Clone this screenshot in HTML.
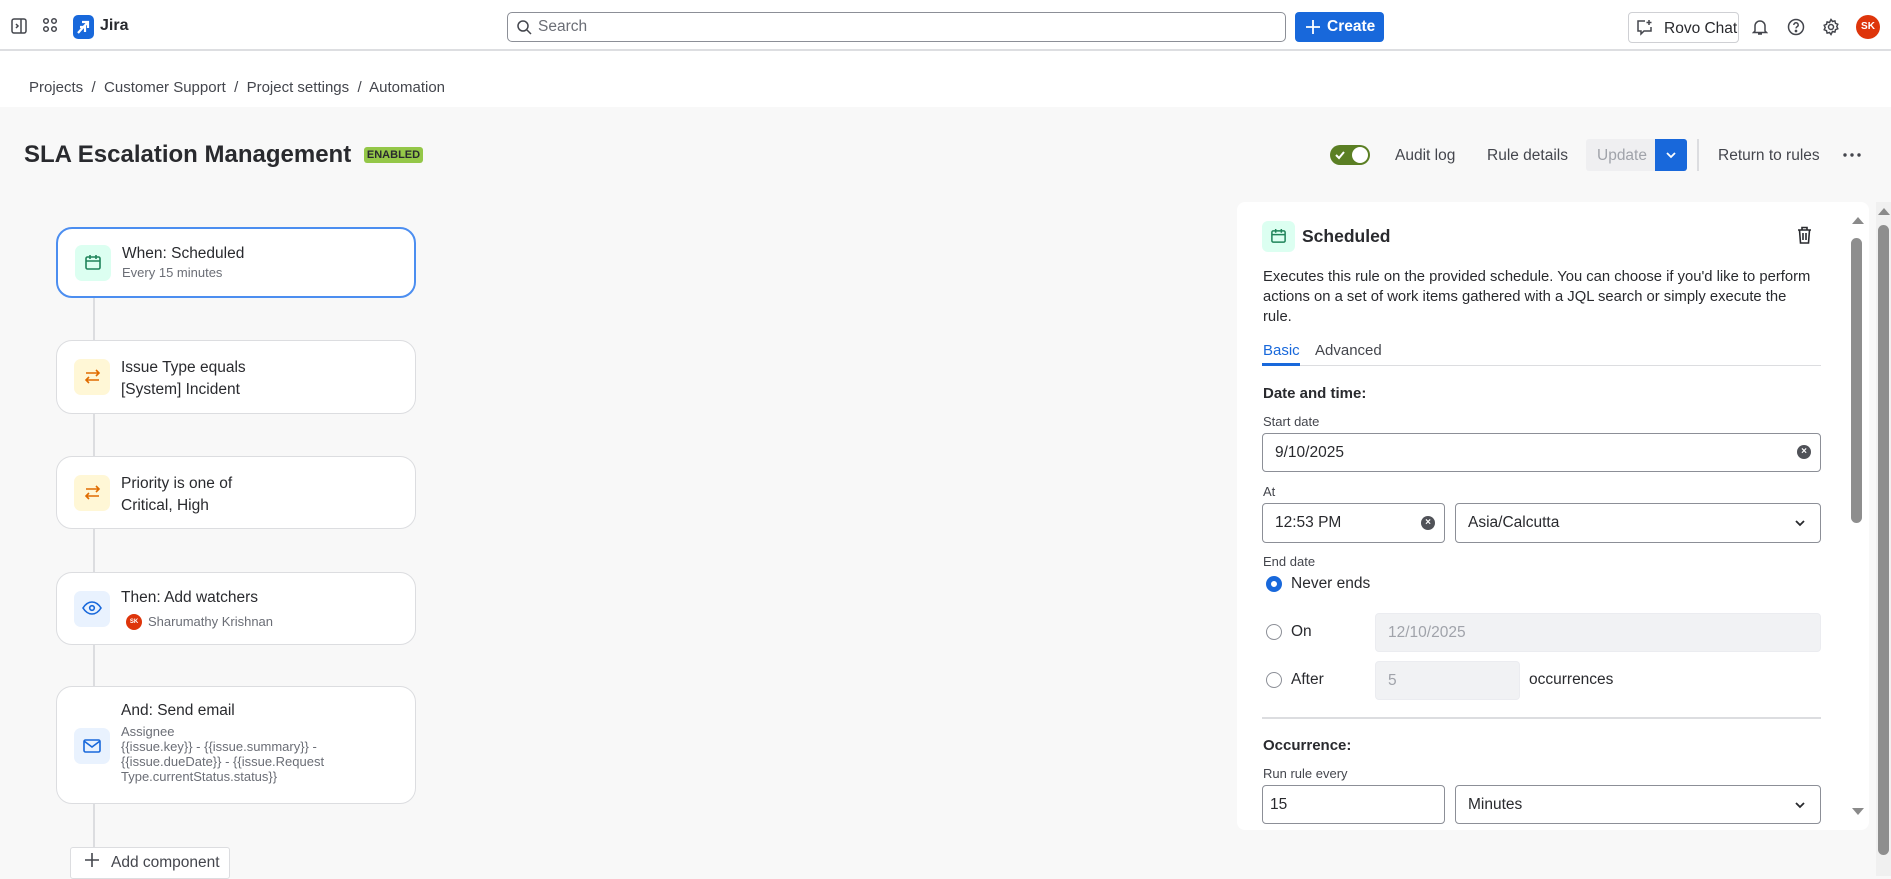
<!DOCTYPE html>
<html><head><meta charset="utf-8"><style>
*{box-sizing:border-box;margin:0;padding:0}
body{width:1891px;height:876px;overflow:hidden;font-family:"Liberation Sans",sans-serif;color:#292a2e;background:#f8f8f8;position:relative}
.a{position:absolute;white-space:nowrap}
.top{left:0;top:0;width:1891px;height:51px;background:#fff;border-bottom:2px solid #dddee1}
.white{left:0;top:51px;width:1891px;height:56px;background:#fff}
.card{position:absolute;left:56px;width:360px;background:#fff;border:1.5px solid #dcdde0;border-radius:16px}
.ib{position:absolute;left:17px;width:36px;height:36px;border-radius:7px}
.ct{position:absolute;left:64px;font-size:15.5px;color:#292a2e;white-space:nowrap}
.cs{font-size:13px;color:#6b6e76}
.inp{position:absolute;border:1.5px solid #8c8f97;border-radius:4px;background:#fff;font-size:15.5px;padding-left:12px;display:flex;align-items:center}
.dis{position:absolute;background:#f1f2f4;border:1px solid #ebecf0;border-radius:4px;font-size:15.5px;color:#a0a3aa;padding-left:12px;display:flex;align-items:center}
.lbl{position:absolute;font-size:13px;color:#44464d}
.radio{position:absolute;width:16px;height:16px;border-radius:50%;border:1.5px solid #8c8f97;background:#fff}
.rt{position:absolute;font-size:15.5px}
.x{position:absolute;width:14px;height:14px;border-radius:50%;background:#505258;color:#fff;font-size:10px;line-height:14px;text-align:center;font-weight:bold}
</style></head><body>
<div class="a top"></div>
<div class="a white"></div>
<svg class="a" style="left:11px;top:18px" width="16" height="16" viewBox="0 0 16 16" fill="none" stroke="#44464d" stroke-width="1.5"><rect x="1" y="1" width="14" height="14" rx="2"/><path d="M10 1v14M5 6l2 2-2 2"/></svg>
<svg class="a" style="left:42px;top:17px" width="16" height="16" viewBox="0 0 16 16" fill="none" stroke="#44464d" stroke-width="1.5"><circle cx="4" cy="4" r="2.3"/><circle cx="12" cy="4" r="2.3"/><circle cx="4" cy="12" r="2.3"/><circle cx="12" cy="12" r="2.3"/></svg>
<div class="a" style="left:73px;top:15px;width:21px;height:24px;background:#1868db;border-radius:5px"></div>
<svg class="a" style="left:76px;top:19px" width="16" height="16" viewBox="0 0 16 16" fill="none" stroke="#fff" stroke-width="2.2"><path d="M6 3h6v6M4 8h5v5M2 14l10-11"/></svg>
<div class="a" style="left:100px;top:17px;font-size:16px;font-weight:bold">Jira</div>
<div class="a" style="left:507px;top:12px;width:779px;height:30px;border:1.5px solid #8c8f97;border-radius:5px;background:#fff"></div>
<svg class="a" style="left:516px;top:19px" width="16" height="16" viewBox="0 0 16 16" fill="none" stroke="#44464d" stroke-width="1.5"><circle cx="7" cy="7" r="5"/><path d="M11 11l4 4"/></svg>
<div class="a" style="left:538px;top:18px;font-size:15.5px;color:#6b6e76">Search</div>
<div class="a" style="left:1295px;top:12px;width:89px;height:30px;background:#1868db;border-radius:4px"></div>
<svg class="a" style="left:1305px;top:19px" width="16" height="16" viewBox="0 0 16 16" stroke="#fff" stroke-width="1.8"><path d="M8 1v14M1 8h14"/></svg>
<div class="a" style="left:1327px;top:18px;font-size:15.5px;font-weight:bold;color:#fff">Create</div>
<div class="a" style="left:1628px;top:12px;width:111px;height:31px;border:1px solid #cfd0d4;border-radius:4px;background:#fff;font-size:15.5px;padding:7px 0 0 35px">Rovo Chat</div>
<svg class="a" style="left:1636px;top:19px" width="18" height="17" viewBox="0 0 18 17" fill="none" stroke="#44464d" stroke-width="1.5"><path d="M9 2H2v10h3v3l3-3h7V8"/><path d="M13 1v5M10.5 3.5h5"/></svg>
<svg class="a" style="left:1752px;top:18px" width="16" height="18" viewBox="0 0 16 18" fill="none" stroke="#44464d" stroke-width="1.5"><path d="M3 13V8a5 5 0 0110 0v5l1.5 1.5h-13zM6 16h4"/></svg>
<svg class="a" style="left:1787px;top:18px" width="18" height="18" viewBox="0 0 18 18" fill="none" stroke="#44464d" stroke-width="1.5"><circle cx="9" cy="9" r="7.5"/><path d="M6.8 7a2.2 2.2 0 114 1.2c-.8.6-1.8 1-1.8 2.2"/><circle cx="9" cy="13" r=".6" fill="#44464d"/></svg>
<svg class="a" style="left:1822px;top:18px" width="18" height="18" viewBox="0 0 18 18" fill="none" stroke="#44464d" stroke-width="1.5"><circle cx="9" cy="9" r="2.5"/><path d="M9 1.5l1.5 2 2.4-.6.6 2.4 2.3 1-1 2.2 1 2.2-2.3 1-.6 2.4-2.4-.6L9 16.5l-1.5-2-2.4.6-.6-2.4-2.3-1 1-2.2-1-2.2 2.3-1 .6-2.4 2.4.6z"/></svg>
<div class="a" style="left:1856px;top:15px;width:24px;height:24px;border-radius:50%;background:#de350b;color:#fff;font-size:10px;font-weight:bold;text-align:center;line-height:24px">SK</div>
<div class="a" style="left:29px;top:79px;font-size:15px;color:#44464d">Projects &nbsp;/&nbsp; Customer Support &nbsp;/&nbsp; Project settings &nbsp;/&nbsp; Automation</div>
<div class="a" style="left:24px;top:141px;font-size:24px;font-weight:bold">SLA Escalation Management</div>
<div class="a" style="left:364px;top:147px;width:59px;height:16px;background:#94c748;border-radius:3px;font-size:11px;font-weight:bold;text-align:center;line-height:16px;color:#292a2e">ENABLED</div>
<div class="a" style="left:1330px;top:145px;width:40px;height:20px;background:#5b7f24;border-radius:10px"></div>
<div class="a" style="left:1352px;top:147px;width:16px;height:16px;background:#fff;border-radius:50%"></div>
<svg class="a" style="left:1334px;top:149px" width="12" height="12" viewBox="0 0 12 12" fill="none" stroke="#fff" stroke-width="2"><path d="M2 6l3 3 5-6"/></svg>
<div class="a" style="left:1395px;top:147px;font-size:15.5px;color:#44464d">Audit log</div>
<div class="a" style="left:1487px;top:147px;font-size:15.5px;color:#44464d">Rule details</div>
<div class="a" style="left:1586px;top:139px;width:69px;height:32px;background:#efeff1;border-radius:3px 0 0 3px;font-size:15.5px;color:#a0a3aa;padding:8px 0 0 11px">Update</div>
<div class="a" style="left:1655px;top:139px;width:32px;height:32px;background:#1868db;border-radius:0 3px 3px 0"></div>
<svg class="a" style="left:1665px;top:150px" width="12" height="10" viewBox="0 0 12 10" fill="none" stroke="#fff" stroke-width="1.8"><path d="M2 3l4 4 4-4"/></svg>
<div class="a" style="left:1697px;top:139px;width:2px;height:32px;background:#dcdde0"></div>
<div class="a" style="left:1718px;top:147px;font-size:15.5px;color:#44464d">Return to rules</div>
<svg class="a" style="left:1842px;top:152px" width="20" height="6"><circle cx="3" cy="3" r="1.7" fill="#44464d"/><circle cx="10" cy="3" r="1.7" fill="#44464d"/><circle cx="17" cy="3" r="1.7" fill="#44464d"/></svg>
<div class="a" style="left:93px;top:298px;width:2px;height:550px;background:#dcdde0"></div>
<div class="card" style="top:227px;height:71px;border:2px solid #4c8ef0">
 <div class="ib" style="top:16px;background:#dcfff1"></div>
 <svg class="a" style="left:26px;top:25px" width="18" height="18" viewBox="0 0 18 18" fill="none" stroke="#1f845a" stroke-width="1.6"><rect x="2" y="3" width="14" height="12" rx="1.5"/><path d="M2 7h14M6 1v4M12 1v4"/></svg>
 <div class="ct" style="top:16px">When: Scheduled<div class="cs" style="margin-top:2px">Every 15 minutes</div></div>
</div>
<div class="card" style="top:340px;height:74px">
 <div class="ib" style="top:18px;background:#fff7d6"></div>
 <svg class="a" style="left:27px;top:27px" width="17" height="17" viewBox="0 0 17 17" fill="none" stroke="#e06c00" stroke-width="1.6"><path d="M2 5h13M12 2l3 3-3 3M15 12H2M5 9l-3 3 3 3"/></svg>
 <div class="ct" style="top:16px;line-height:22px">Issue Type equals<br>[System] Incident</div>
</div>
<div class="card" style="top:456px;height:73px">
 <div class="ib" style="top:18px;background:#fff7d6"></div>
 <svg class="a" style="left:27px;top:27px" width="17" height="17" viewBox="0 0 17 17" fill="none" stroke="#e06c00" stroke-width="1.6"><path d="M2 5h13M12 2l3 3-3 3M15 12H2M5 9l-3 3 3 3"/></svg>
 <div class="ct" style="top:16px;line-height:22px">Priority is one of<br>Critical, High</div>
</div>
<div class="card" style="top:572px;height:73px">
 <div class="ib" style="top:18px;background:#e9f2fe"></div>
 <svg class="a" style="left:25px;top:28px" width="20" height="14" viewBox="0 0 20 14" fill="none" stroke="#1868db" stroke-width="1.6"><path d="M1 7c2.5-4 5.5-6 9-6s6.5 2 9 6c-2.5 4-5.5 6-9 6s-6.5-2-9-6z"/><circle cx="10" cy="7" r="2.3"/></svg>
 <div class="ct" style="top:16px">Then: Add watchers</div>
 <div class="a" style="left:69px;top:41px;width:16px;height:16px;border-radius:50%;background:#de350b;color:#fff;font-size:6px;font-weight:bold;text-align:center;line-height:16px">SK</div>
 <div class="a cs" style="left:91px;top:41px">Sharumathy Krishnan</div>
</div>
<div class="card" style="top:686px;height:118px">
 <div class="ib" style="top:41px;background:#e9f2fe"></div>
 <svg class="a" style="left:26px;top:52px" width="18" height="14" viewBox="0 0 18 14" fill="none" stroke="#1868db" stroke-width="1.6"><rect x="1" y="1" width="16" height="12" rx="1.5"/><path d="M1 2l8 6 8-6"/></svg>
 <div class="ct" style="top:15px">And: Send email<div class="cs" style="margin-top:4px;line-height:15px">Assignee<br>{{issue.key}} - {{issue.summary}} -<br>{{issue.dueDate}} - {{issue.Request<br>Type.currentStatus.status}}</div></div>
</div>
<div class="a" style="left:70px;top:847px;width:160px;height:32px;background:#fff;border:1px solid #dcdde0;border-radius:3px;font-size:15.5px;color:#44464d;padding:6px 0 0 40px">Add component</div>
<svg class="a" style="left:84px;top:852px" width="16" height="16" viewBox="0 0 16 16" stroke="#44464d" stroke-width="1.6"><path d="M8 1v14M1 8h14"/></svg>
<div class="a" style="left:1237px;top:202px;width:632px;height:628px;background:#fff;border-radius:8px"></div>
<div class="a" style="left:1262px;top:221px;width:33px;height:31px;background:#dcfff1;border-radius:6px"></div>
<svg class="a" style="left:1270px;top:228px" width="17" height="17" viewBox="0 0 18 18" fill="none" stroke="#1f845a" stroke-width="1.6"><rect x="2" y="3" width="14" height="12" rx="1.5"/><path d="M2 7h14M6 1v4M12 1v4"/></svg>
<div class="a" style="left:1302px;top:226px;font-size:17.5px;font-weight:bold">Scheduled</div>
<svg class="a" style="left:1797px;top:226px" width="15" height="18" viewBox="0 0 15 18" fill="none" stroke="#292a2e" stroke-width="1.6"><path d="M1 4h13M5 4V1.5h5V4M2.5 4l1 13h8l1-13M6 7v7M9 7v7"/></svg>
<div class="a" style="left:1263px;top:267px;font-size:14.8px;line-height:20px;color:#292a2e">Executes this rule on the provided schedule. You can choose if you'd like to perform<br>actions on a set of work items gathered with a JQL search or simply execute the<br>rule.</div>
<div class="a" style="left:1263px;top:342px;font-size:15px;color:#1868db">Basic</div>
<div class="a" style="left:1315px;top:342px;font-size:15px;color:#44464d">Advanced</div>
<div class="a" style="left:1262px;top:365px;width:559px;height:1px;background:#dcdde0"></div>
<div class="a" style="left:1262px;top:363px;width:38px;height:3px;background:#1868db"></div>
<div class="a" style="left:1263px;top:385px;font-size:15px;font-weight:bold">Date and time:</div>
<div class="lbl" style="left:1263px;top:414px">Start date</div>
<div class="inp" style="left:1262px;top:433px;width:559px;height:39px">9/10/2025</div>
<div class="x" style="left:1797px;top:445px">×</div>
<div class="lbl" style="left:1263px;top:484px">At</div>
<div class="inp" style="left:1262px;top:503px;width:183px;height:40px">12:53 PM</div>
<div class="x" style="left:1421px;top:516px">×</div>
<div class="inp" style="left:1455px;top:503px;width:366px;height:40px">Asia/Calcutta</div>
<svg class="a" style="left:1794px;top:518px" width="12" height="10" viewBox="0 0 12 10" fill="none" stroke="#292a2e" stroke-width="1.8"><path d="M2 3l4 4 4-4"/></svg>
<div class="lbl" style="left:1263px;top:554px">End date</div>
<div class="radio" style="left:1266px;top:576px;border:5px solid #1868db"></div>
<div class="rt" style="left:1291px;top:575px">Never ends</div>
<div class="radio" style="left:1266px;top:624px"></div>
<div class="rt" style="left:1291px;top:623px">On</div>
<div class="dis" style="left:1375px;top:613px;width:446px;height:39px">12/10/2025</div>
<div class="radio" style="left:1266px;top:672px"></div>
<div class="rt" style="left:1291px;top:671px">After</div>
<div class="dis" style="left:1375px;top:661px;width:145px;height:39px">5</div>
<div class="rt" style="left:1529px;top:671px">occurrences</div>
<div class="a" style="left:1262px;top:717px;width:559px;height:2px;background:#dcdde0"></div>
<div class="a" style="left:1263px;top:737px;font-size:15px;font-weight:bold">Occurrence:</div>
<div class="lbl" style="left:1263px;top:766px">Run rule every</div>
<div class="inp" style="left:1262px;top:785px;width:183px;height:39px;padding-left:7px">15</div>
<div class="inp" style="left:1455px;top:785px;width:366px;height:39px">Minutes</div>
<svg class="a" style="left:1794px;top:800px" width="12" height="10" viewBox="0 0 12 10" fill="none" stroke="#292a2e" stroke-width="1.8"><path d="M2 3l4 4 4-4"/></svg>
<svg class="a" style="left:1851px;top:215px" width="14" height="10"><path d="M1 9L7 2l6 7z" fill="#8a8a8a"/></svg>
<div class="a" style="left:1851px;top:238px;width:11px;height:285px;background:#8e8e8e;border-radius:6px"></div>
<svg class="a" style="left:1851px;top:807px" width="14" height="10"><path d="M1 1l6 7 6-7z" fill="#8a8a8a"/></svg>
<div class="a" style="left:1876px;top:202px;width:15px;height:674px;background:#f0f0f0"></div>
<div class="a" style="left:1878px;top:225px;width:11px;height:630px;background:#8e8e8e;border-radius:6px"></div>
<svg class="a" style="left:1877px;top:206px" width="14" height="10"><path d="M1 9L7 2l6 7z" fill="#8a8a8a"/></svg>
</body></html>
